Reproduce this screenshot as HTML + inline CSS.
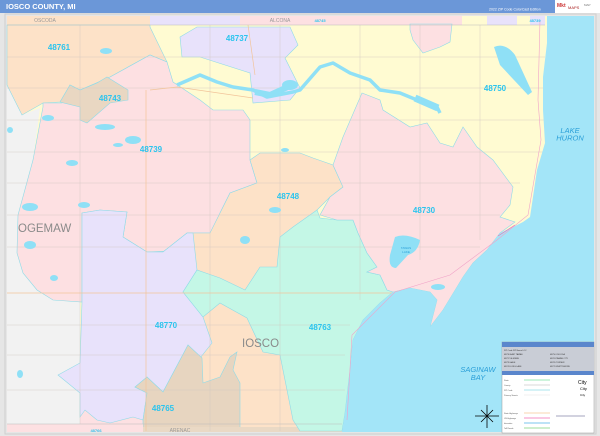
<!DOCTYPE html>
<html><head><meta charset="utf-8"><style>
html,body{margin:0;padding:0;width:600px;height:436px;overflow:hidden;background:#e9e9e9;font-family:"Liberation Sans",sans-serif}
svg{display:block}
</style></head><body>
<svg width="600" height="436" viewBox="0 0 600 436" xmlns="http://www.w3.org/2000/svg" font-family="Liberation Sans, sans-serif">
<rect x="0" y="0" width="600" height="436" fill="#e6e6e6"/>
<rect x="0" y="0" width="600" height="13" fill="#6b97d8"/>
<text x="6" y="9" font-size="7.5" font-weight="bold" fill="#fff">IOSCO COUNTY, MI</text>
<text x="489" y="10.5" font-size="3.5" fill="#fff">2022 ZIP Code ColorCast Edition</text>
<rect x="555" y="0" width="45" height="13" fill="#fff"/>
<text x="557" y="7" font-size="5" font-weight="bold" fill="#c33">Mkt</text>
<text x="568" y="9" font-size="4" fill="#a22">MAPS</text>
<text x="584" y="6" font-size="3" fill="#777">MAP</text>
<rect x="7" y="16" width="587" height="416" fill="#fffbd2"/>
<rect x="7" y="16" width="143" height="9" fill="#fde2c8"/>
<rect x="150" y="16" width="90" height="9" fill="#e8e2fb"/>
<rect x="240" y="16" width="222" height="9" fill="#fde0e2"/>
<rect x="487" y="16" width="30" height="9" fill="#e8e2fb"/>
<rect x="530" y="16" width="15" height="9" fill="#e8e2fb"/>
<polygon fill="#f2f2f2" points="7,85 22,115 40,108 33,160 18,215 17,253 23,273 37,290 53,300 80,302 80,363 58,375 80,393 80,424 7,424"/>
<rect x="80" y="400" width="65" height="25" fill="#fde0e2"/>
<polygon fill="#fde2c8" stroke="#8fdbe8" stroke-width="0.6" points="7,25 150,25 150,27 167,62 150,55 110,77 97,83 80,90 70,85 60,102 43,103 22,115 7,85"/>
<polygon fill="#e8e2fb" stroke="#8fdbe8" stroke-width="0.6" points="180,37 197,27 290,27 298,45 285,58 300,88 290,100 253,103 250,73 200,57 182,57"/>
<polygon fill="#fde0e2" stroke="#8fdbe8" stroke-width="0.6" points="43,103 62,103 70,85 80,90 110,77 150,55 167,62 173,82 200,100 213,110 243,110 250,120 250,160 257,183 230,193 220,213 220,227 210,233 187,233 163,252 147,252 123,237 127,212 100,210 82,213 82,302 53,300 37,290 23,273 17,253 18,215 33,160 43,107"/>
<polygon fill="#e9d7c2" stroke="#8fdbe8" stroke-width="0.6" points="60,102 70,85 80,90 97,83 107,77 128,90 128,100 110,103 87,123 80,120 80,107"/>
<polygon fill="#fde2c8" stroke="#8fdbe8" stroke-width="0.6" points="147,252 163,252 187,233 210,233 220,213 230,193 257,183 250,160 260,153 300,153 313,158 333,165 343,187 330,197 317,210 320,227 300,431 193,431 193,250"/>
<polygon fill="#e8e2fb" stroke="#8fdbe8" stroke-width="0.6" points="82,213 100,210 127,212 123,237 147,252 163,252 187,233 193,233 197,270 183,292 203,317 212,343 200,358 188,345 163,392 147,377 135,387 147,393 143,420 133,417 110,423 97,420 85,410 80,417 80,393 58,375 80,363 82,302"/>
<polygon fill="#e7d5c0" stroke="#8fdbe8" stroke-width="0.6" points="135,387 147,377 163,392 188,345 202,358 203,383 220,377 230,357 237,352 233,370 240,383 240,431 143,431 143,420 147,393"/>
<rect x="7" y="424" width="136" height="8" fill="#fde0e2"/>
<rect x="143" y="427" width="200" height="5" fill="#ead9c5"/>
<polygon fill="#c4f7e6" stroke="#8fdbe8" stroke-width="0.6" points="183,292 197,270 220,278 245,290 260,267 277,267 280,237 293,227 317,210 320,218 337,220 353,220 358,233 367,253 377,267 367,272 380,275 387,290 393,292 380,303 363,320 353,340 350,370 348,387 345,413 342,431 300,431 293,420 280,355 263,352 247,318 220,303 203,317"/>
<polygon fill="#fde0e2" stroke="#8fdbe8" stroke-width="0.6" points="343,137 362,93 380,100 383,110 410,127 427,123 440,143 453,147 463,127 477,147 493,160 513,187 510,205 500,217 515,222 500,233 487,250 473,263 463,277 457,287 443,310 430,327 437,300 430,292 410,288 393,292 387,290 380,275 367,272 377,267 367,253 358,233 353,220 337,220 320,215 330,197 343,187 333,165"/>
<polygon fill="#fde0e2" stroke="#8fdbe8" stroke-width="0.6" points="410,24 410,30 413,40 423,53 440,47 450,42 452,24"/>
<g stroke="#cfc6c0" stroke-width="0.4" fill="none">
<line x1="7" y1="120" x2="545" y2="120"/><line x1="7" y1="183" x2="520" y2="183"/><line x1="7" y1="247" x2="480" y2="247"/><line x1="7" y1="355" x2="345" y2="355"/>
<line x1="80" y1="25" x2="80" y2="424"/><line x1="210" y1="25" x2="210" y2="431"/><line x1="280" y1="25" x2="280" y2="431"/><line x1="360" y1="25" x2="360" y2="300"/><line x1="420" y1="25" x2="420" y2="260"/><line x1="480" y1="25" x2="480" y2="240"/>
<line x1="7" y1="152" x2="545" y2="152"/><line x1="7" y1="215" x2="500" y2="215"/><line x1="7" y1="325" x2="350" y2="325"/><line x1="7" y1="390" x2="345" y2="390"/><line x1="7" y1="57" x2="545" y2="57"/><line x1="7" y1="88" x2="545" y2="88"/>
</g>
<g stroke="#f2c49a" stroke-width="0.7" fill="none">
<line x1="7" y1="293" x2="395" y2="293"/><line x1="146" y1="90" x2="146" y2="431"/><path d="M150,90 L177,87 L253,98"/><line x1="248" y1="25" x2="255" y2="75"/>
</g>
<line x1="7" y1="25" x2="545" y2="25" stroke="#bbb" stroke-width="0.5"/>
<line x1="7" y1="424" x2="342" y2="424" stroke="#bbb" stroke-width="0.5"/>
<polygon fill="#a3e5f8" points="547,16 547,43 543,77 543,110 545,143 537,170 533,197 530,217 523,222 515,226 500,233 487,250 473,263 463,277 457,287 443,310 430,327 437,300 430,292 410,288 393,292 380,303 363,320 353,340 350,370 348,387 345,413 342,432 594,432 594,16"/>
<path d="M515,225 L498,236" stroke="#f06bb0" stroke-width="0.6" fill="none"/>
<path d="M540,20 L538,100 L541,140 L528,215 L497,240 L450,275 L395,292 L352,335 L347,420" stroke="#f1a3c8" stroke-width="0.6" fill="none"/>
<path d="M177,85 L200,75 L217,82 L233,87 L253,90 L267,97 L293,92 L300,90 L320,67 L333,63 L350,73 L370,80 L380,90 L400,93 L417,100 L437,107 L440,113" stroke="#8fe0f6" stroke-width="3.5" fill="none" stroke-linejoin="round"/>
<path d="M255,92 L270,95 L292,85" stroke="#8fe0f6" stroke-width="6" fill="none"/>
<path d="M415,98 L438,108" stroke="#8fe0f6" stroke-width="7" fill="none"/>
<path d="M494,47 Q505,42 515,55 L532,92 L528,95 L500,65 Z" fill="#8fe0f6"/>
<path d="M395,237 Q405,233 420,240 Q418,252 408,255 L396,268 Q388,268 390,255 Z" fill="#8fe0f6"/>
<ellipse cx="438" cy="287" rx="7" ry="3" fill="#8fe0f6"/>
<g fill="#8fe0f6">
<ellipse cx="105" cy="127" rx="10" ry="3"/><ellipse cx="133" cy="140" rx="8" ry="4"/><ellipse cx="118" cy="145" rx="5" ry="2"/><ellipse cx="72" cy="163" rx="6" ry="3"/><ellipse cx="48" cy="118" rx="6" ry="3"/><ellipse cx="30" cy="207" rx="8" ry="4"/><ellipse cx="84" cy="205" rx="6" ry="3"/><ellipse cx="30" cy="245" rx="6" ry="4"/><ellipse cx="20" cy="374" rx="3" ry="4"/><ellipse cx="54" cy="278" rx="4" ry="3"/><ellipse cx="106" cy="51" rx="6" ry="3"/><ellipse cx="285" cy="150" rx="4" ry="2"/><ellipse cx="275" cy="210" rx="6" ry="3"/><ellipse cx="245" cy="240" rx="5" ry="4"/><ellipse cx="290" cy="85" rx="8" ry="5"/><ellipse cx="10" cy="130" rx="3" ry="3"/>
</g>
<g fill="#2bc4ee" font-weight="bold" font-size="8">
<text x="59" y="50" text-anchor="middle">48761</text>
<text x="237" y="41" text-anchor="middle">48737</text>
<text x="110" y="101" text-anchor="middle">48743</text>
<text x="151" y="152" text-anchor="middle">48739</text>
<text x="288" y="199" text-anchor="middle">48748</text>
<text x="495" y="91" text-anchor="middle">48750</text>
<text x="424" y="213" text-anchor="middle">48730</text>
<text x="166" y="328" text-anchor="middle">48770</text>
<text x="320" y="330" text-anchor="middle">48763</text>
<text x="163" y="411" text-anchor="middle">48765</text>
</g>
<g fill="#2bc4ee" font-weight="bold" font-size="4">
<text x="320" y="22" text-anchor="middle">48745</text><text x="535" y="22" text-anchor="middle">48739</text><text x="96" y="432" text-anchor="middle">48766</text>
</g>
<g fill="#9a9a9a" font-size="5"><text x="45" y="22" text-anchor="middle">OSCODA</text><text x="280" y="22" text-anchor="middle">ALCONA</text><text x="180" y="432" text-anchor="middle">ARENAC</text></g>
<g fill="#8a8a8a" font-size="11.5"><text x="18" y="232">OGEMAW</text><text x="242" y="347">IOSCO</text></g>
<g fill="#2a9fd8" font-style="italic" font-size="7.5" text-anchor="middle"><text x="570" y="133">LAKE</text><text x="570" y="140.5">HURON</text><text x="478" y="372">SAGINAW</text><text x="478" y="380">BAY</text></g>
<text x="406" y="249" font-size="3" fill="#2a9fd8" text-anchor="middle">TAWAS</text><text x="406" y="253" font-size="3" fill="#2a9fd8" text-anchor="middle">LAKE</text>
<g stroke="#000" stroke-width="0.8"><line x1="487" y1="405" x2="487" y2="428"/><line x1="475" y1="416" x2="499" y2="416"/><line x1="481" y1="410" x2="493" y2="422"/><line x1="493" y1="410" x2="481" y2="422"/></g>
<rect x="502" y="342" width="92" height="91" fill="#fff" stroke="#999" stroke-width="0.5"/>
<rect x="502" y="342" width="92" height="5" fill="#5a86cc"/>
<rect x="502" y="347" width="92" height="24" fill="#c9cdd6"/>
<rect x="502" y="371" width="92" height="4" fill="#5a86cc"/>
<g fill="#333" font-size="2"><text x="504" y="351">ZIP Code  ZIP Name  LOC</text><text x="504" y="355">48730  EAST TAWAS</text><text x="504" y="359">48737  GLENNIE</text><text x="504" y="363">48739  HALE</text><text x="504" y="367">48743  LONG LAKE</text><text x="550" y="355">48750  OSCODA</text><text x="550" y="359">48763  TAWAS CITY</text><text x="550" y="363">48765  TURNER</text><text x="550" y="367">48770  WHITTEMORE</text></g>
<g stroke-width="0.8" fill="none"><line x1="524" y1="380" x2="550" y2="380" stroke="#7de0a0"/><line x1="524" y1="385" x2="550" y2="385" stroke="#ccc"/><line x1="524" y1="390" x2="550" y2="390" stroke="#8fdbe8"/><line x1="524" y1="395" x2="550" y2="395" stroke="#eee"/><line x1="524" y1="413" x2="550" y2="413" stroke="#f6c896"/><line x1="524" y1="418" x2="550" y2="418" stroke="#f06bb0"/><line x1="524" y1="423" x2="550" y2="423" stroke="#4fb3e8"/><line x1="524" y1="428" x2="550" y2="428" stroke="#7ed07e"/><line x1="556" y1="416" x2="585" y2="416" stroke="#88a"/></g>
<g fill="#555" font-size="2"><text x="504" y="381">State</text><text x="504" y="386">County</text><text x="504" y="391">ZIP Code</text><text x="504" y="396">Primary Streets</text><text x="504" y="414">State Highways</text><text x="504" y="419">US Highways</text><text x="504" y="424">Interstate</text><text x="504" y="429">Toll Roads</text></g>
<g fill="#000" font-size="5"><text x="578" y="384">City</text><text x="580" y="390" font-size="4">City</text><text x="580" y="396" font-size="3">City</text></g>
<rect x="5" y="14" width="591" height="420" fill="none" stroke="#cfcfcf" stroke-width="1"/>
</svg>
</body></html>
